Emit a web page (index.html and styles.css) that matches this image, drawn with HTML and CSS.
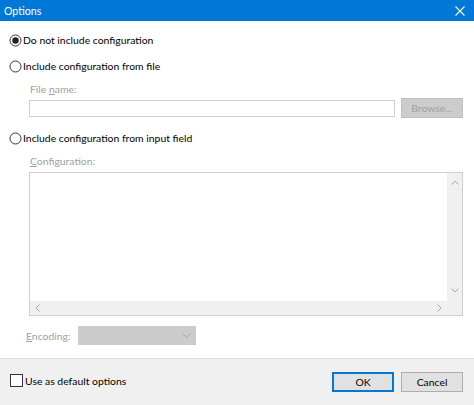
FILE: index.html
```html
<!DOCTYPE html>
<html>
<head>
<meta charset="utf-8">
<link rel="stylesheet" href="styles.css">
</head>
<body>
<div class="window">
  <div class="titlebar">
    <span class="title">Options</span>
    <svg class="close" width="10" height="10" viewBox="0 0 10 10"><path d="M0.5 0.5 L9.5 9.5 M9.5 0.5 L0.5 9.5" stroke="#fff" stroke-width="1.1" fill="none"/></svg>
  </div>
  <div class="content">
    <div class="radio-row r1">
      <svg class="radio" width="13" height="13" viewBox="0 0 13 13"><circle cx="6.5" cy="6.5" r="5.5" fill="#fff" stroke="#333" stroke-width="1"/><circle cx="6.5" cy="6.5" r="3.2" fill="#222"/></svg>
      <span>Do not include configuration</span>
    </div>
    <div class="radio-row r2">
      <svg class="radio" width="13" height="13" viewBox="0 0 13 13"><circle cx="6.5" cy="6.5" r="5.5" fill="#fff" stroke="#333" stroke-width="1"/></svg>
      <span>Include configuration from file</span>
    </div>
    <div class="sub label file-label">File <u>n</u>ame:</div>
    <div class="sub file-row">
      <div class="input"></div>
      <div class="btn-disabled">Browse...</div>
    </div>
    <div class="radio-row r3">
      <svg class="radio" width="13" height="13" viewBox="0 0 13 13"><circle cx="6.5" cy="6.5" r="5.5" fill="#fff" stroke="#333" stroke-width="1"/></svg>
      <span>Include configuration from input field</span>
    </div>
    <div class="sub label config-label"><u>C</u>onfiguration:</div>
    <div class="sub textarea">
      <div class="ta-body"></div>
      <div class="vscroll">
        <svg width="8" height="5" viewBox="0 0 8 5"><path d="M0.5 4.5 L4 1 L7.5 4.5" stroke="#a6a6a6" fill="none"/></svg>
        <svg width="8" height="5" viewBox="0 0 8 5"><path d="M0.5 0.5 L4 4 L7.5 0.5" stroke="#a6a6a6" fill="none"/></svg>
      </div>
      <div class="hscroll">
        <svg width="5" height="8" viewBox="0 0 5 8"><path d="M4.5 0.5 L1 4 L4.5 7.5" stroke="#a6a6a6" fill="none"/></svg>
        <svg width="5" height="8" viewBox="0 0 5 8"><path d="M0.5 0.5 L4 4 L0.5 7.5" stroke="#a6a6a6" fill="none"/></svg>
      </div>
      <div class="corner"></div>
    </div>
    <div class="enc-row">
      <span class="label"><u>E</u>ncoding:</span>
      <div class="combo">
        <svg width="9" height="5" viewBox="0 0 9 5"><path d="M0.5 0.5 L4.5 4.5 L8.5 0.5" stroke="#a6a6a6" fill="none"/></svg>
      </div>
    </div>
  </div>
  <div class="footer">
    <div class="check-row">
      <div class="checkbox"></div>
      <span>Use as default options</span>
    </div>
    <div class="buttons">
      <div class="btn ok">OK</div>
      <div class="btn">Cancel</div>
    </div>
  </div>
</div>
</body>
</html>
```
FILE: styles.css
```css
html, body {
  margin: 0;
  padding: 0;
}
body {
  width: 474px;
  height: 405px;
  overflow: hidden;
  font-family: Lato, "Noto Sans", sans-serif;
  font-size: 10.4px;
  color: #000;
  background: #fff;
}
.window {
  display: flex;
  flex-direction: column;
  height: 405px;
}
.titlebar {
  height: 21px;
  background: #0078d7;
  color: #fff;
  display: flex;
  align-items: center;
  justify-content: space-between;
  padding: 0 9px 0 4px;
  font-size: 10.6px;
}
.content {
  flex: 1;
  background: #fff;
  padding: 0 11px 0 9px;
  display: flex;
  flex-direction: column;
}
.radio-row {
  height: 16px;
  display: flex;
  align-items: center;
  gap: 1px;
}
.radio {
  display: block;
}
.r1 { margin-top: 11px; }
.r2 { margin-top: 10px; }
.r3 { margin-top: 12px; }
.sub {
  margin-left: 20px;
}
.label {
  color: #a0a0a0;
  line-height: 14px;
}
.label u {
  text-decoration-thickness: 1px;
  text-underline-offset: 1px;
}
.file-label {
  margin-top: 8px;
  margin-left: 21px;
}
.file-row {
  margin-top: 2px;
  height: 20px;
  display: flex;
  align-items: center;
  gap: 6px;
}
.input {
  flex: 1;
  height: 15px;
  border: 1px solid #cfcfcf;
  background: #fff;
}
.btn-disabled {
  width: 60px;
  height: 18px;
  border: 1px solid #bfbfbf;
  background: #cccccc;
  color: #a0a0a0;
  display: flex;
  align-items: center;
  justify-content: center;
}
.config-label {
  margin-top: 8px;
  margin-left: 21px;
}
.textarea {
  margin-top: 4px;
  height: 142px;
  border: 1px solid #cfcfcf;
  display: grid;
  grid-template-columns: 1fr 15px;
  grid-template-rows: 1fr 14px;
}
.ta-body {
  background: #fff;
}
.vscroll {
  background: #f0f0f0;
  display: flex;
  flex-direction: column;
  justify-content: space-between;
  align-items: center;
  padding: 7px 0 8px;
}
.hscroll {
  background: #f0f0f0;
  display: flex;
  justify-content: space-between;
  align-items: center;
  padding: 0 5px 0 5px;
}
.corner {
  background: #f0f0f0;
}
.enc-row {
  margin-top: 10px;
  margin-left: 17px;
  display: flex;
  align-items: center;
  gap: 7px;
  height: 19px;
}
.combo {
  width: 118px;
  height: 19px;
  background: #cccccc;
  display: flex;
  align-items: center;
  justify-content: flex-end;
  padding-right: 5px;
  box-sizing: border-box;
}
.footer {
  height: 47px;
  background: #f0f0f0;
  border-top: 1px solid #dfdfdf;
  display: flex;
  align-items: center;
  justify-content: space-between;
  padding: 0 11px 0 10px;
  box-sizing: border-box;
}
.check-row {
  display: flex;
  align-items: center;
  gap: 2px;
  margin-top: -3px;
}
.checkbox {
  width: 11px;
  height: 11px;
  border: 1px solid #333;
  background: #fff;
}
.buttons {
  display: flex;
  gap: 7px;
  margin-top: -1px;
}
.btn {
  width: 60px;
  height: 18px;
  border: 1px solid #adadad;
  background: #e1e1e1;
  display: flex;
  align-items: center;
  justify-content: center;
}
.btn.ok {
  border-color: #0078d7;
  box-shadow: inset 0 0 0 1px #0078d7;
}
```
